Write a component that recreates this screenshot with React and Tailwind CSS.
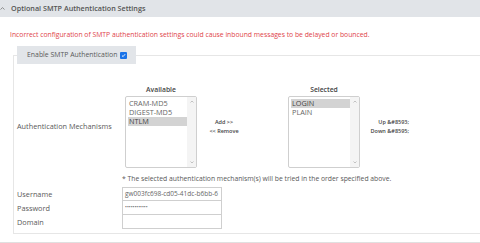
import React from 'react';

const ListBox = ({ items, selected }) => (
  <div className="flex h-[72px] w-[72px] rounded-[2px] border border-[#cfcfcf] bg-white">
    <div className="flex-1 pl-[2px] pt-[2px] text-[7.3px]">
      {items.map((item) => (
        <div
          key={item}
          className={`h-[9px] pl-[1px] leading-[9px] ${item === selected ? 'bg-[#d3d3d3] text-[#444]' : 'text-[#666]'}`}
        >
          {item}
        </div>
      ))}
    </div>
    <div className="flex w-[9px] flex-col items-center justify-between bg-[#f4f4f4] py-[3px]">
      <svg width="4" height="3" viewBox="0 0 4 3">
        <path d="M0.5 2.5 L2 1 L3.5 2.5" fill="none" stroke="#b5b5b5" strokeWidth="0.8" />
      </svg>
      <svg width="4" height="3" viewBox="0 0 4 3">
        <path d="M0.5 0.5 L2 2 L3.5 0.5" fill="none" stroke="#b5b5b5" strokeWidth="0.8" />
      </svg>
    </div>
  </div>
);

const FieldRow = ({ label, children }) => (
  <div className="flex h-[14px] items-center">
    <div className="w-[108px] pl-[3px] text-[7.3px]">{label}</div>
    {children}
  </div>
);

const App = () => {
  return (
    <div className="relative h-[243px] w-[480px] overflow-hidden bg-white font-['Open_Sans',sans-serif] text-[6.8px] text-[#595959]">
      <div className="flex h-[17px] items-center bg-[#e1e4e8]">
        <svg width="5" height="3" viewBox="0 0 5 3" className="mr-[6px]">
          <path d="M0.5 2.5 L2.5 0.6 L4.5 2.5" fill="none" stroke="#777" strokeWidth="0.8" />
        </svg>
        <span className="text-[7.2px] font-semibold text-[#555]">Optional SMTP Authentication Settings</span>
      </div>

      <div className="mt-[13px] h-[9px] pl-[10px] leading-[9px] text-[#e0444a]">
        Incorrect configuration of SMTP authentication settings could cause inbound messages to be delayed or bounced.
      </div>

      <fieldset className="ml-[13px] mt-[7px] w-[475px] border border-[#e6e6e6] p-0 pb-[4px]">
        <legend className="ml-[3px] flex h-[18px] w-[119px] items-center bg-[#e2e5e9] pl-[10px] text-[6.9px]">
          <span>Enable SMTP Authentication</span>
          <span className="ml-[3px] flex h-[7px] w-[7px] items-center justify-center rounded-[1px] bg-[#1a73e8]">
            <svg width="5" height="5" viewBox="0 0 5 5">
              <path d="M1 2.6 L2.1 3.6 L4.1 1.2" fill="none" stroke="#fff" strokeWidth="0.9" />
            </svg>
          </span>
        </legend>

        <div className="mt-[21px] flex items-center">
          <div className="w-[108px] pl-[3px] text-[7.3px]">Authentication Mechanisms</div>
          <div className="ml-[3px] flex flex-col items-center">
            <div className="mb-[2px] h-[9px] font-semibold leading-[9px] text-[#444]">Available</div>
            <ListBox items={['CRAM-MD5', 'DIGEST-MD5', 'NTLM']} selected="NTLM" />
          </div>
          <div className="flex w-[54px] flex-col items-center text-[5.5px] font-semibold text-[#444]">
            <div className="h-[9px] leading-[9px]">Add &gt;&gt;</div>
            <div className="h-[9px] leading-[9px]">&lt;&lt; Remove</div>
          </div>
          <div className="ml-[37px] flex flex-col items-center">
            <div className="mb-[2px] h-[9px] font-semibold leading-[9px] text-[#444]">Selected</div>
            <ListBox items={['LOGIN', 'PLAIN']} selected="LOGIN" />
          </div>
          <div className="flex w-[49px] flex-col items-end text-[5.5px] font-semibold text-[#444]">
            <div className="h-[9px] leading-[9px]">Up &amp;#8593;</div>
            <div className="h-[9px] leading-[9px]">Down &amp;#8595;</div>
          </div>
        </div>

        <div className="mt-[6px] h-[9px] pl-[108px] leading-[9px]">
          * The selected authentication mechanism(s) will be tried in the order specified above.
        </div>

        <div className="mt-[4px] flex flex-col">
          <FieldRow label="Username">
            <div className="h-[14px] w-[100px] overflow-hidden whitespace-nowrap border border-[#cfcfcf] pl-[2px] text-[6.5px] leading-[12px] text-[#666]">
              gw003fc698-cd05-41dc-b6bb-6
            </div>
          </FieldRow>
          <FieldRow label="Password">
            <div className="h-[14px] w-[100px] border border-t-0 border-[#cfcfcf] pl-[2px] text-[5px] leading-[12px] tracking-[0px] text-[#666]">
              ••••••••••••
            </div>
          </FieldRow>
          <FieldRow label="Domain">
            <div className="h-[14px] w-[100px] border border-t-0 border-[#cfcfcf]" />
          </FieldRow>
        </div>
      </fieldset>

      <div className="mt-[8px] h-[10px] border-t border-[#e0e0e0] bg-[#f2f3f5]" />
    </div>
  );
};

export default App;
